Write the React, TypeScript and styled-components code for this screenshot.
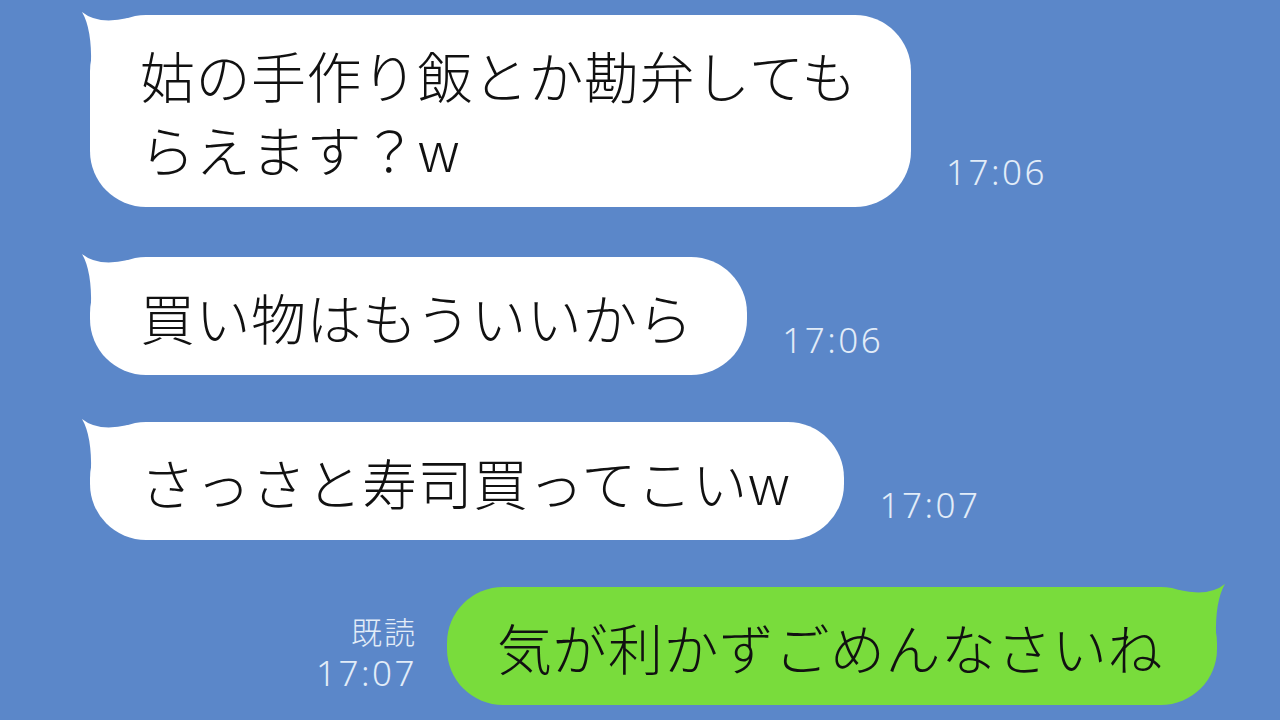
import React from 'react';
import styled, { createGlobalStyle } from 'styled-components';

// ─── Styles ────────────────────────────────────────────────────────────────

const GlobalStyle = createGlobalStyle`
  html, body { margin: 0; padding: 0; }
  body {
    background: #5b87c9;
    font-family: "Noto Sans CJK JP", "Noto Sans", sans-serif;
  }
`;

const Screen = styled.div`
  width: 1280px;
  height: 720px;
  overflow: hidden;
  background: #5b87c9;
  box-sizing: border-box;
  padding: 15px 63px 0 90px;
  display: flex;
  flex-direction: column;
`;

const Row = styled.div<{ mine?: boolean; gapTop: number }>`
  display: flex;
  align-items: flex-end;
  justify-content: ${p => (p.mine ? 'flex-end' : 'flex-start')};
  gap: ${p => (p.mine ? 30 : 35)}px;
  margin-top: ${p => p.gapTop}px;
`;

const Bubble = styled.div<{ mine?: boolean }>`
  position: relative;
  background: ${p => (p.mine ? '#79dc3c' : '#ffffff')};
  color: #111;
  border-radius: 56px;
  padding: 22px 54px 22px 50px;
  font-family: "Noto Sans CJK JP", sans-serif;
  font-weight: 300;
  font-size: 55px;
  line-height: 74px;
  letter-spacing: 0.5px;
  white-space: nowrap;
`;

const Tail = styled.svg<{ mine?: boolean }>`
  position: absolute;
  top: -6px;
  width: 56px;
  height: 56px;
  overflow: visible;
  ${p => (p.mine ? 'right: -8px; transform: scaleX(-1);' : 'left: -8px;')}
`;

const Time = styled.span`
  font-family: "Noto Sans", "Liberation Sans", sans-serif;
  font-weight: 300;
  font-size: 35px;
  line-height: 40px;
  letter-spacing: 2.5px;
  color: #e2ecf8;
  margin-bottom: 15px;
`;

const ReadInfo = styled.div`
  display: flex;
  flex-direction: column;
  align-items: flex-end;
  margin-bottom: 12px;
  color: #e2ecf8;
`;

const ReadLabel = styled.span`
  font-family: "Noto Sans CJK JP", sans-serif;
  font-weight: 300;
  font-size: 31px;
  line-height: 36px;
  letter-spacing: 2px;
`;

const ReadTime = styled(Time)`
  margin-bottom: 0;
  margin-top: 4px;
`;

// ─── Parts ─────────────────────────────────────────────────────────────────

const BubbleTail = ({ mine }: { mine?: boolean }) => (
  <Tail mine={mine} viewBox="0 0 56 56">
    <path
      d="M0 3 Q16 16 46 9 L46 56 L9 56 Q10 20 0 3 Z"
      fill={mine ? '#79dc3c' : '#ffffff'}
    />
  </Tail>
);

interface Msg {
  lines: string[];
  time: string;
  gapTop: number;
}

const incoming: Msg[] = [
  { lines: ['姑の手作り飯とか勘弁しても', 'らえます？w'], time: '17:06', gapTop: 0 },
  { lines: ['買い物はもういいから'], time: '17:06', gapTop: 50 },
  { lines: ['さっさと寿司買ってこいw'], time: '17:07', gapTop: 47 },
];

// ─── Component ─────────────────────────────────────────────────────────────

const App: React.FC = () => (
  <>
    <GlobalStyle />
    <Screen>
      {incoming.map((m, i) => (
        <Row key={i} gapTop={m.gapTop}>
          <Bubble>
            <BubbleTail />
            {m.lines.map((l, j) => (
              <React.Fragment key={j}>
                {j > 0 && <br />}
                {l}
              </React.Fragment>
            ))}
          </Bubble>
          <Time>{m.time}</Time>
        </Row>
      ))}
      <Row mine gapTop={47}>
        <ReadInfo>
          <ReadLabel>既読</ReadLabel>
          <ReadTime>17:07</ReadTime>
        </ReadInfo>
        <Bubble mine>
          <BubbleTail mine />
          気が利かずごめんなさいね
        </Bubble>
      </Row>
    </Screen>
  </>
);

export default App;
